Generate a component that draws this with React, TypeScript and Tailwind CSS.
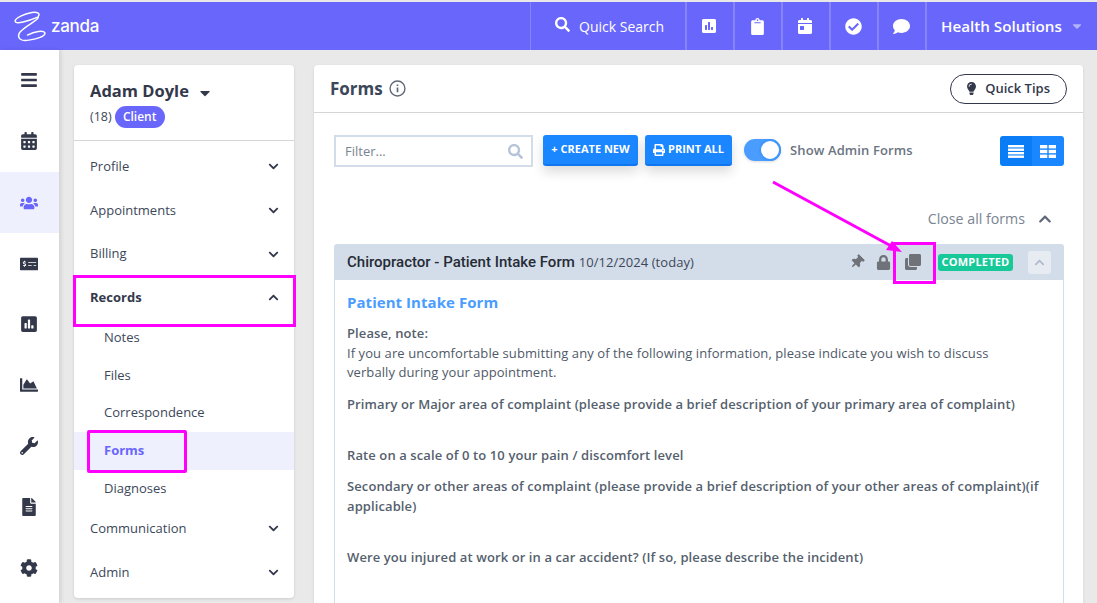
import type { ReactNode } from "react";
import {
  FaBars,
  FaCalendarAlt,
  FaCalendarDay,
  FaCaretDown,
  FaChartArea,
  FaCheckCircle,
  FaChevronDown,
  FaChevronUp,
  FaClipboard,
  FaClone,
  FaCog,
  FaComment,
  FaFileAlt,
  FaLightbulb,
  FaLock,
  FaMoneyCheckAlt,
  FaPoll,
  FaPrint,
  FaSearch,
  FaThumbtack,
  FaUsers,
  FaWrench,
} from "react-icons/fa";

const font = "font-['Open_Sans','Liberation_Sans',sans-serif]";

function ZandaLogo() {
  return (
    <svg width="32" height="31" viewBox="21 14 88 85" fill="none" stroke="#fff" strokeWidth="4" strokeLinecap="round">
      <path d="M88 28 C94 20 84 15 70 18 C50 22 24 32 24 42 C25 52 60 42 88 30 C92 38 48 56 36 74 C28 90 42 98 62 94 C84 90 108 84 106 74 C102 66 78 70 58 80" />
    </svg>
  );
}

function TopIcon({ children }: { children: ReactNode }) {
  return (
    <div className="flex h-full w-12 items-center justify-center border-l-2 border-white/20 pr-[2px] text-white">
      {children}
    </div>
  );
}

function RailIcon({ children, active, low }: { children: ReactNode; active?: boolean; low?: boolean }) {
  return (
    <div
      className={`flex h-[61px] w-full items-center justify-center pr-[1px] text-[18px] ${low ? "" : "pb-[2px]"} ${
        active ? "bg-[#eef0fe] text-[#6966fb]" : "text-[#33384a]"
      }`}
    >
      {children}
    </div>
  );
}

function NavRow({ label, open }: { label: string; open?: boolean }) {
  return (
    <div className="flex h-[43.7px] items-center justify-between pl-4 pr-[15px] text-[13px] text-[#3c4759]">
      <span className={open ? "font-bold text-[#33384a]" : ""}>{label}</span>
      {open ? (
        <FaChevronUp className="text-[11px] text-[#33384a]" />
      ) : (
        <FaChevronDown className="text-[11px] text-[#33384a]" />
      )}
    </div>
  );
}

function SubRow({ label, active }: { label: string; active?: boolean }) {
  return (
    <div
      className={`flex h-[37.8px] items-center pl-[30px] text-[13px] ${
        active ? "bg-[#eef0fe] font-bold text-[#6966fb]" : "text-[#3c4759]"
      }`}
    >
      {label}
    </div>
  );
}

function Para({ children, className = "" }: { children: ReactNode; className?: string }) {
  return (
    <p className={`text-[13px] leading-[19.5px] font-semibold tracking-[0.1px] text-[#555f6e] ${className}`}>
      {children}
    </p>
  );
}

export default function App() {
  return (
    <div className={`relative flex h-[603px] w-[1097px] flex-col overflow-hidden bg-[#e9e9e9] pt-[2px] ${font}`}>
      <header className="flex h-12 shrink-0 items-center justify-between bg-[#6966fb] text-white">
        <div className="flex items-center gap-[5px] pl-[14px]">
          <ZandaLogo />
          <span className="font-['Inter',sans-serif] text-[17px] font-medium leading-none tracking-[-0.3px]">zanda</span>
        </div>
        <div className="flex h-full items-center">
          <div className="flex h-full w-[155px] items-center gap-[9px] border-l border-white/20 pl-6">
            <FaSearch className="mb-1 text-[15px]" />
            <span className="text-[14px]">Quick Search</span>
          </div>
          <TopIcon><FaPoll className="text-[16px]" /></TopIcon>
          <TopIcon><FaClipboard className="text-[17px]" /></TopIcon>
          <TopIcon><FaCalendarDay className="text-[16px]" /></TopIcon>
          <TopIcon><FaCheckCircle className="text-[17px]" /></TopIcon>
          <TopIcon><FaComment className="text-[17px]" /></TopIcon>
          <div className="flex h-full w-[172px] items-center gap-2 border-l-2 border-white/20 pl-[14px]">
            <span className="text-[15.2px] font-semibold">Health Solutions</span>
            <FaCaretDown className="text-[14px] text-white/50" />
          </div>
        </div>
      </header>

      <div className="flex min-h-0 flex-1">
        <aside className="flex w-[59px] shrink-0 flex-col bg-white shadow-[2px_0_4px_rgba(0,0,0,0.1)]">
          <RailIcon><FaBars /></RailIcon>
          <RailIcon><FaCalendarAlt /></RailIcon>
          <RailIcon active low><FaUsers /></RailIcon>
          <RailIcon low><FaMoneyCheckAlt /></RailIcon>
          <RailIcon><FaPoll /></RailIcon>
          <RailIcon><FaChartArea /></RailIcon>
          <RailIcon><FaWrench /></RailIcon>
          <RailIcon><FaFileAlt /></RailIcon>
          <RailIcon><FaCog /></RailIcon>
        </aside>

        <nav className="mb-[5px] ml-[15px] mt-[15px] w-[220px] shrink-0 rounded-[4px] bg-white shadow-[0_1px_3px_rgba(0,0,0,0.12)]">
          <div className="h-[76px] border-b border-[#d5d5d8] pl-4 pt-[13px]">
            <div className="flex items-center gap-[8px] text-[16.5px] font-bold leading-[26px] text-[#33384a]">
              Adam Doyle <FaCaretDown className="mt-1 text-[16px]" />
            </div>
            <div className="mt-[2px] flex items-center gap-[3px] text-[12.5px] text-[#3c4759]">
              (18)
              <span className="flex h-[22px] w-[50px] items-center justify-center rounded-full bg-[#6966fb] text-[12px] font-semibold text-white">
                Client
              </span>
            </div>
          </div>
          <div className="pt-1">
            <NavRow label="Profile" />
            <NavRow label="Appointments" />
            <NavRow label="Billing" />
            <NavRow label="Records" open />
            <div className="-mb-[1px] -mt-[1px]">
              <SubRow label="Notes" />
              <SubRow label="Files" />
              <SubRow label="Correspondence" />
              <SubRow label="Forms" active />
              <SubRow label="Diagnoses" />
            </div>
            <NavRow label="Communication" />
            <NavRow label="Admin" />
          </div>
        </nav>

        <main className="ml-5 mt-[15px] flex w-[769px] shrink-0 flex-col rounded-t-[4px] bg-white shadow-[0_1px_3px_rgba(0,0,0,0.1)]">
          <div className="flex h-[48px] shrink-0 items-center justify-between border-b border-[#d5d5d8] pl-4 pr-4">
            <div className="flex items-center gap-[6px]">
              <span className="text-[17px] font-bold text-[#3c4759]">Forms</span>
              <svg width="17" height="17" viewBox="0 0 16 16" fill="none" stroke="#5f6877" strokeWidth="1.3">
                <circle cx="8" cy="8" r="7" />
                <path d="M8 7v4.5M8 4.2v1.4" strokeWidth="1.6" />
              </svg>
            </div>
            <div className="flex h-[30px] items-center gap-[7px] rounded-full border border-[#33384a] bg-white pl-[14px] pr-4 text-[13px] font-semibold text-[#33384a]">
              <FaLightbulb className="text-[13px]" />
              Quick Tips
            </div>
          </div>

          <div className="flex flex-col pl-5 pr-[19px] pt-[22px]">
            <div className="flex items-start">
              <div className="flex h-8 w-[199px] items-center justify-between border-2 border-[#d3dde9] pl-[9px] pr-2 pt-[1px] text-[13px] text-[#7a8492]">
                Filter...
                <FaSearch className="text-[15px] text-[#b5c4d8]" />
              </div>
              <div className="ml-[10px] flex h-[31px] w-[95px] items-center justify-center rounded-[3px] border-b-2 border-[#0f76f0] bg-[#1a86ff] text-[11px] font-bold text-white shadow-[0_6px_12px_rgba(0,0,0,0.14)]">
                + CREATE NEW
              </div>
              <div className="ml-[7px] flex h-[31px] w-[87px] items-center justify-center gap-[3px] rounded-[3px] border-b-2 border-[#0f76f0] bg-[#1a86ff] text-[11px] font-bold text-white shadow-[0_6px_12px_rgba(0,0,0,0.14)]">
                <FaPrint className="text-[12px]" /> PRINT ALL
              </div>
              <div className="ml-3 mt-1 flex h-[22px] w-[37px] items-center justify-end rounded-full bg-[#4a9dff] shadow-[0_1px_3px_rgba(0,0,0,0.15)]">
                <div className="h-[22px] w-[22px] rounded-full border-2 border-[#3f96fb] bg-white" />
              </div>
              <span className="ml-[9px] mt-[6px] text-[13px] font-semibold tracking-[0.12px] text-[#6b7482]">Show Admin Forms</span>
              <div className="ml-auto mt-[1px] flex h-[30px] w-16 overflow-hidden rounded-[3px] text-white">
                <div className="flex w-8 items-center justify-center bg-[#0a7cf5]">
                  <svg width="16" height="13" viewBox="0 0 16 13" fill="#fff">
                    <rect y="0" width="16" height="2.4" />
                    <rect y="3.5" width="16" height="2.4" />
                    <rect y="7" width="16" height="2.4" />
                    <rect y="10.5" width="16" height="2.4" />
                  </svg>
                </div>
                <div className="flex w-8 items-center justify-center bg-[#1a86ff]">
                  <svg width="16" height="13" viewBox="0 0 16 13" fill="#fff">
                    <rect x="0" y="0" width="7.3" height="3.4" />
                    <rect x="8.7" y="0" width="7.3" height="3.4" />
                    <rect x="0" y="4.8" width="7.3" height="3.4" />
                    <rect x="8.7" y="4.8" width="7.3" height="3.4" />
                    <rect x="0" y="9.6" width="7.3" height="3.4" />
                    <rect x="8.7" y="9.6" width="7.3" height="3.4" />
                  </svg>
                </div>
              </div>
            </div>

            <div className="mt-10 flex h-6 items-center justify-end gap-[13px] pr-[12px] text-[14.2px] text-[#7a8492]">
              Close all forms
              <FaChevronUp className="text-[14px] text-[#5f6877]" />
            </div>

            <div className="mt-[13px] flex h-9 items-center justify-between rounded-t-[3px] bg-[#d3dde9] px-[13px]">
              <div className="flex items-baseline gap-1">
                <span className="font-['Roboto',sans-serif] text-[15px] font-medium text-[#262b36]">Chiropractor - Patient Intake Form</span>
                <span className="text-[13px] tracking-[0.05px] text-[#3c4759]">10/12/2024 (today)</span>
              </div>
              <div className="flex items-center text-[#6f7278]">
                <FaThumbtack className="rotate-45 text-[14px]" />
                <FaLock className="ml-[12px] text-[15px]" />
                <FaClone className="ml-[14px] text-[16px]" />
                <span className="ml-[17px] flex h-[17px] w-[75px] items-center justify-center rounded-[3px] bg-[#17c999] text-[11px] font-bold tracking-[0.2px] text-white">COMPLETED</span>
                <div className="ml-[15px] flex h-[23px] w-[23px] items-center justify-center rounded-[3px] bg-[#e7ecf3]">
                  <FaChevronUp className="text-[11px] text-[#b0bccb]" />
                </div>
              </div>
            </div>
            <div className="h-[400px] border-x border-[#d3dde9] pl-3 pr-[50px] pt-[11px]">
              <h2 className="text-[15px] font-bold leading-[22px] tracking-[0.05px] text-[#4a9dff]">Patient Intake Form</h2>
              <Para className="mt-[11px]">Please, note:</Para>
              <p className="text-[13px] leading-[19.5px] tracking-[0.08px] text-[#4f5968]">
                If you are uncomfortable submitting any of the following information, please indicate you wish to discuss verbally during your appointment.
              </p>
              <Para className="mt-[12px] -mr-[40px]">Primary or Major area of complaint (please provide a brief description of your primary area of complaint)</Para>
              <Para className="mt-[32px]">Rate on a scale of 0 to 10 your pain / discomfort level</Para>
              <Para className="mt-[10px] -mr-[40px] leading-[20px]">Secondary or other areas of complaint (please provide a brief description of your other areas of complaint)(if applicable)</Para>
              <Para className="mt-[32px]">Were you injured at work or in a car accident? (If so, please describe the incident)</Para>
            </div>
          </div>
        </main>
      </div>

      {/* annotation overlays */}
      <div className="pointer-events-none absolute left-[73px] top-[275px] h-[52px] w-[223px] border-[3px] border-[#ff00ff]" />
      <div className="pointer-events-none absolute left-[87px] top-[430px] h-[43px] w-[100px] rounded-[2px] border-[3px] border-[#ff00ff]" />
      <div className="pointer-events-none absolute left-[893px] top-[242px] h-[42px] w-[43px] border-[3px] border-[#ff00ff]" />
      <svg className="pointer-events-none absolute left-0 top-0" width="1097" height="603" fill="none">
        <path d="M773 182 L893 247" stroke="#ff00ff" strokeWidth="3" />
        <path d="M902 252 L886 250 L892 241 Z" fill="#ff00ff" />
      </svg>
    </div>
  );
}
